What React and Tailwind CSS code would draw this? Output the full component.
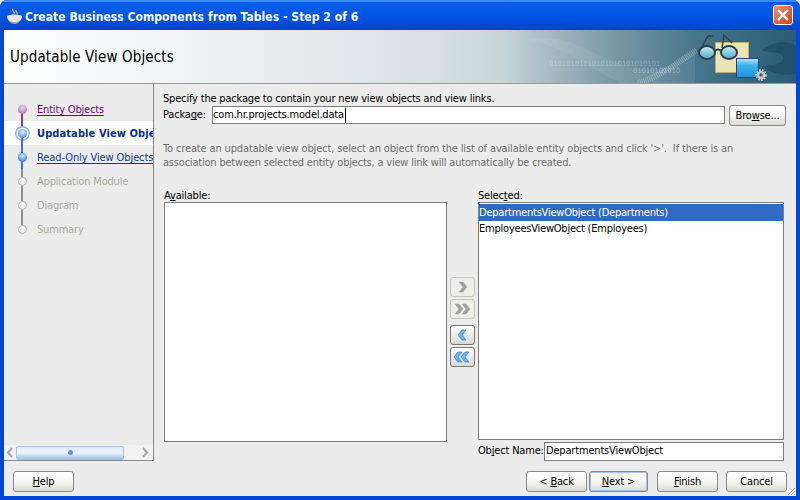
import React from 'react';

const uiFont = "font-['DejaVu_Sans_Condensed','DejaVu_Sans',sans-serif]";

const Key = ({ children }) => <span className="underline [text-decoration-skip-ink:none] underline-offset-1">{children}</span>;

const steps = [
  { label: 'Entity Objects', text: 'text-[#800080] underline underline-offset-2', node: 'purple', below: 'bg-[#8a3a94]' },
  { label: 'Updatable View Objects', text: 'text-[#0a2e8c] font-bold tracking-[0.1px]', node: 'current', above: 'bg-[#8a3a94]', below: 'bg-[#3a74d8]', active: true },
  { label: 'Read-Only View Objects', text: 'text-[#0a3aa8] underline underline-offset-2 tracking-[-0.1px]', node: 'blue', above: 'bg-[#3a74d8]', below: 'bg-[#3a74d8]' },
  { label: 'Application Module', text: 'text-[#aaaa9c]', node: 'off', above: 'bg-[#8e8e8e]', below: 'bg-[#8e8e8e]' },
  { label: 'Diagram', text: 'text-[#aaaa9c]', node: 'off', above: 'bg-[#8e8e8e]', below: 'bg-[#8e8e8e]' },
  { label: 'Summary', text: 'text-[#aaaa9c]', node: 'off', above: 'bg-[#8e8e8e]' },
];

const nodeStyles = {
  purple: 'w-[9px] h-[9px] bg-[radial-gradient(circle_at_50%_35%,#f0dcf0,#b078b8_75%)]',
  current: 'w-[9px] h-[9px] bg-[radial-gradient(circle_at_50%_35%,#e4f0fc,#4a8ce0_80%)] [box-shadow:0_0_0_1.500px_#ffffff,0_0_0_3px_#8fb4e4]',
  blue: 'w-[9px] h-[9px] bg-[radial-gradient(circle_at_50%_35%,#d8ecfc,#3a7ce0_75%)]',
  off: 'w-[9px] h-[9px] border border-[#b0b0b0] bg-[radial-gradient(circle_at_50%_35%,#ffffff,#f8f8f8_60%,#d0d0d0)]',
};

const Step = ({ step }) => (
  <div className={`flex h-[24px] items-stretch ${step.active ? 'bg-white' : ''}`}>
    <div className="ml-[11px] flex w-[14px] shrink-0 flex-col items-center">
      <div className={`w-[2px] flex-1 ${step.above || ''}`} />
      <div className={`shrink-0 rounded-full ${nodeStyles[step.node]}`} />
      <div className={`w-[2px] flex-1 ${step.below || ''}`} />
    </div>
    <div className={`ml-[8px] mt-[2px] self-center whitespace-nowrap leading-[14px] ${step.text}`}>{step.label}</div>
  </div>
);

const Button = ({ className = '', children }) => (
  <button className={`flex h-[21px] items-center justify-center rounded-[3px] border border-[#8a8a8a] bg-gradient-to-b from-white via-[#f6f6f4] to-[#dcdcd6] leading-none text-black ${className}`}>
    <span className="whitespace-pre">{children}</span>
  </button>
);

const Chevron = ({ dir, double, color, edge }) => {
  const one = dir === 'right' ? 'M2 3 L6 3 L10 8 L6 13 L2 13 L6 8 Z' : 'M5 3 L9 3 L5 8 L9 13 L5 13 L1 8 Z';
  return (
    <svg width={double ? 20 : 14} height="16" viewBox={double ? '0 0 20 16' : '0 0 12 16'}>
      <path d={one} fill={color} stroke={edge} strokeWidth="0.500" />
      {double && <path d={one} fill={color} stroke={edge} strokeWidth="0.500" transform="translate(7 0)" />}
    </svg>
  );
};

const ArrowButton = ({ dir, double, enabled, className = '' }) => (
  <button className={`flex h-[20px] w-[25px] items-center justify-center rounded-[3px] border ${enabled ? 'border-[#777777] bg-gradient-to-b from-white to-[#d8d8d4]' : 'border-[#c6c6b6] bg-[#eeeeea]'} ${className}`}>
    <Chevron dir={dir} double={double} color={enabled ? '#6ab4f8' : '#a0a0a0'} edge={enabled ? '#1a5cc8' : '#a0a0a0'} />
  </button>
);

const HeaderArt = () => (
  <svg width="296" height="53" viewBox="0 0 296 53" className="shrink-0">
    <defs>
      <linearGradient id="winFill" x1="0" y1="0" x2="0" y2="1">
        <stop offset="0" stopColor="#bfeaf8" />
        <stop offset="0.35" stopColor="#3cb4ec" />
        <stop offset="1" stopColor="#1c90dc" />
      </linearGradient>
      <linearGradient id="lensFill" x1="0" y1="0" x2="0" y2="1">
        <stop offset="0" stopColor="#d4f0f8" />
        <stop offset="0.5" stopColor="#8ccce4" />
        <stop offset="1" stopColor="#5aa8c8" />
      </linearGradient>
    </defs>
    <path d="M30 10 C70 0 95 30 135 38 C160 43 175 35 195 20 L195 53 L120 53 C90 38 60 15 30 10 Z" fill="#ffffff" opacity="0.07" />
    <path d="M138 53 C165 45 180 30 197 20" stroke="#ffffff" strokeOpacity="0.3" strokeWidth="6" strokeDasharray="1 1" fill="none" />
    <text x="49" y="36" fill="#ffffff" fillOpacity="0.28" fontSize="7" fontFamily="DejaVu Sans, sans-serif">01010101010101010101010101</text>
    <text x="133" y="43" fill="#ffffff" fillOpacity="0.35" fontSize="7" fontFamily="DejaVu Sans, sans-serif">01010101010</text>
    <path d="M262 20 C275 10 288 10 296 16 L296 44 C285 46 272 44 262 36 C275 36 286 32 283 26 C278 20 268 24 262 20 Z" fill="#1d4a62" opacity="0.7" />
    <rect x="215.500" y="12.500" width="33" height="30" fill="#ece4b4" stroke="#b8ad78" />
    <path d="M200 20 L208 6 L214 6 M222 18 L224 5 L232 13" stroke="#33444f" strokeWidth="1.500" fill="none" />
    <ellipse cx="207" cy="22.500" rx="8" ry="6.500" fill="url(#lensFill)" stroke="#2c3f4c" strokeWidth="2" />
    <ellipse cx="229" cy="22.500" rx="8" ry="6.500" fill="url(#lensFill)" stroke="#2c3f4c" strokeWidth="2" />
    <path d="M215 21 C217 19 219 19 221 21" stroke="#2c3f4c" strokeWidth="2" fill="none" />
    <rect x="236.500" y="28.500" width="22" height="19" fill="url(#winFill)" stroke="#2f3c80" />
    <circle cx="261" cy="45" r="3" fill="none" stroke="#c8c8c8" strokeWidth="2.500" />
    <circle cx="261" cy="45" r="5" fill="none" stroke="#ffffff" strokeWidth="1.500" strokeDasharray="1.500 1.500" />
  </svg>
);

export default function App() {
  return (
    <div className={`flex h-[500px] w-[800px] flex-col overflow-hidden rounded-t-[7px] bg-[#0047d8] text-[11px] tracking-[-0.18px] text-black ${uiFont}`}>
      {/* title bar */}
      <div className="flex h-[30px] shrink-0 items-center bg-gradient-to-b from-[#0a5ce8] via-[#0058e6] to-[#0041cc] pt-[3px] [box-shadow:inset_0_2px_0_#3a8af8]">
        <svg width="17" height="17" viewBox="0 0 17 17" className="ml-[6px]">
          <path d="M7 1 C5 3 10 4 8 6 M10 2 C9 4 12 4 11 6" stroke="#f0b040" strokeWidth="1.300" fill="none" />
          <path d="M1 8 C4 6 13 6 16 8 C16 12 13 15 8.500 15 C4 15 1 12 1 8 Z" fill="#e8e4dc" />
          <path d="M3 12 C6 15 11 15 14 12 C13 15 11 16 8.500 16 C6 16 4 15 3 12 Z" fill="#a8a49c" />
        </svg>
        <div className="ml-[2px] whitespace-nowrap text-[12px] font-bold tracking-[0.05px] text-white">Create Business Components from Tables - Step 2 of 6</div>
        <div className="ml-auto mr-[7px] -mt-[3px] flex h-[20px] w-[20px] items-center justify-center rounded-[3px] border border-white bg-gradient-to-br from-[#ec9070] to-[#d03c10]">
          <svg width="12" height="12" viewBox="0 0 12 12">
            <path d="M2 2 L10 10 M10 2 L2 10" stroke="#ffffff" strokeWidth="2.400" strokeLinecap="square" />
          </svg>
        </div>
      </div>

      {/* dialog body */}
      <div className="mx-[4px] mb-[4px] flex min-h-0 flex-1 flex-col bg-[#ececec]">
        <div className="flex h-[54px] shrink-0 items-center justify-between border-b border-[#9a9a9a] bg-[linear-gradient(90deg,#ffffff_0%,#e2eaee_40%,#d6e0e4_55%,#c6d4d8_63%,#7f9ca9_76%,#44738a_88%,#2a5c76_100%)] pl-[6px]">
          <div className="mt-[1px] whitespace-nowrap text-[15px] leading-none tracking-[0.13px]">Updatable View Objects</div>
          <HeaderArt />
        </div>

        <div className="flex min-h-0 flex-1">
          <aside className="flex h-[377px] w-[150px] shrink-0 flex-col border-b border-r border-[#8c8c8c]">
            <div className="min-h-0 flex-1 overflow-hidden pt-[13px]">
              {steps.map((step) => (
                <Step key={step.label} step={step} />
              ))}
            </div>
            <div className="flex h-[15px] shrink-0 items-center bg-[#f2f2f2]">
              <svg width="12" height="15" viewBox="0 0 12 15"><path d="M8 3 L4 7.500 L8 12" stroke="#a8a8a8" strokeWidth="2" fill="none" /></svg>
              <div className="flex h-[14px] w-[108px] items-center justify-center rounded-[2px] border border-[#a8c4e0] bg-gradient-to-b from-[#dcecfa] via-[#eef4fa] to-[#9cc0e4]">
                <div className="h-[5px] w-[5px] rounded-full bg-[#5a94e0]" />
              </div>
              <svg width="12" height="15" viewBox="0 0 12 15" className="ml-[15px]"><path d="M4 3 L8 7.500 L4 12" stroke="#a8a8a8" strokeWidth="2" fill="none" /></svg>
            </div>
          </aside>

          <main className="flex min-w-0 flex-1 flex-col pl-[10px] pt-[8px]">
            <div className="-ml-px whitespace-nowrap leading-[13px]">Specify the package to contain your new view objects and view links.</div>
            <div className="flex h-[20px] items-center">
              <div className="-ml-px w-[49px] whitespace-nowrap">Packa<Key>g</Key>e:</div>
              <div className="flex h-[18px] w-[513px] items-center border border-[#7f7f7f] bg-white whitespace-nowrap">
                com.hr.projects.model.data<span className="ml-px h-[15px] w-px bg-black" />
              </div>
              <Button className="ml-[4px] h-[20px] w-[57px]">Bro<Key>w</Key>se...</Button>
            </div>
            <div className="-ml-px mt-[17px] whitespace-pre leading-[14px] text-[#6e6e6e]">
              <div className="tracking-[-0.14px]">To create an updatable view object, select an object from the list of available entity objects and click '&gt;'.  If there is an</div>
              <div className="tracking-[-0.2px]">association between selected entity objects, a view link will automatically be created.</div>
            </div>

            <div className="mt-[18px] flex flex-1">
              <div className="flex w-[283px] shrink-0 flex-col">
                <div className="h-[14px] leading-[15px]">A<Key>v</Key>ailable:</div>
                <div className="h-[240px] border border-[#7f7f7f] bg-white" />
              </div>
              <div className="flex w-[31px] shrink-0 flex-col items-center pt-[89px]">
                <ArrowButton dir="right" />
                <ArrowButton dir="right" double className="mt-[2px]" />
                <ArrowButton dir="left" enabled className="mt-[6px]" />
                <ArrowButton dir="left" double enabled className="mt-[2px]" />
              </div>
              <div className="flex w-[306px] shrink-0 flex-col">
                <div className="h-[14px] leading-[15px]">Selec<Key>t</Key>ed:</div>
                <div className="h-[238px] border border-[#7f7f7f] bg-white pt-px leading-[16px] tracking-[-0.22px]">
                  <div className="h-[17px] bg-[#316ac5] leading-[18px] text-white">DepartmentsViewObject (Departments)</div>
                  <div>EmployeesViewObject (Employees)</div>
                </div>
                <div className="mt-[2px] flex h-[19px] items-center">
                  <div className="w-[66px] whitespace-nowrap">Ob<Key>j</Key>ect Name:</div>
                  <div className="flex h-[19px] flex-1 items-center border border-[#7f7f7f] bg-white pl-px">DepartmentsViewObject</div>
                </div>
              </div>
            </div>
          </main>
        </div>

        <div className="relative flex h-[35px] shrink-0 items-start pl-[9px] pt-[10px]">
          <Button className="w-[61px]"><Key>H</Key>elp</Button>
          <Button className="ml-auto w-[61px]">&lt; <Key>B</Key>ack</Button>
          <Button className="ml-[2px] w-[59px] border-[#5f8ac8] [box-shadow:inset_0_0_0_1px_#a8c4ec]"><Key>N</Key>ext &gt;</Button>
          <Button className="ml-[9px] w-[61px]"><Key>F</Key>inish</Button>
          <Button className="ml-[8px] mr-[9px] w-[61px]">Cancel</Button>
          <svg width="9" height="9" viewBox="0 0 9 9" className="absolute bottom-0 right-0">
            <path d="M8 1 L1 8 M8 4 L4 8 M8 7 L7 8" stroke="#a8a8a0" strokeWidth="1" />
          </svg>
        </div>
      </div>
    </div>
  );
}
